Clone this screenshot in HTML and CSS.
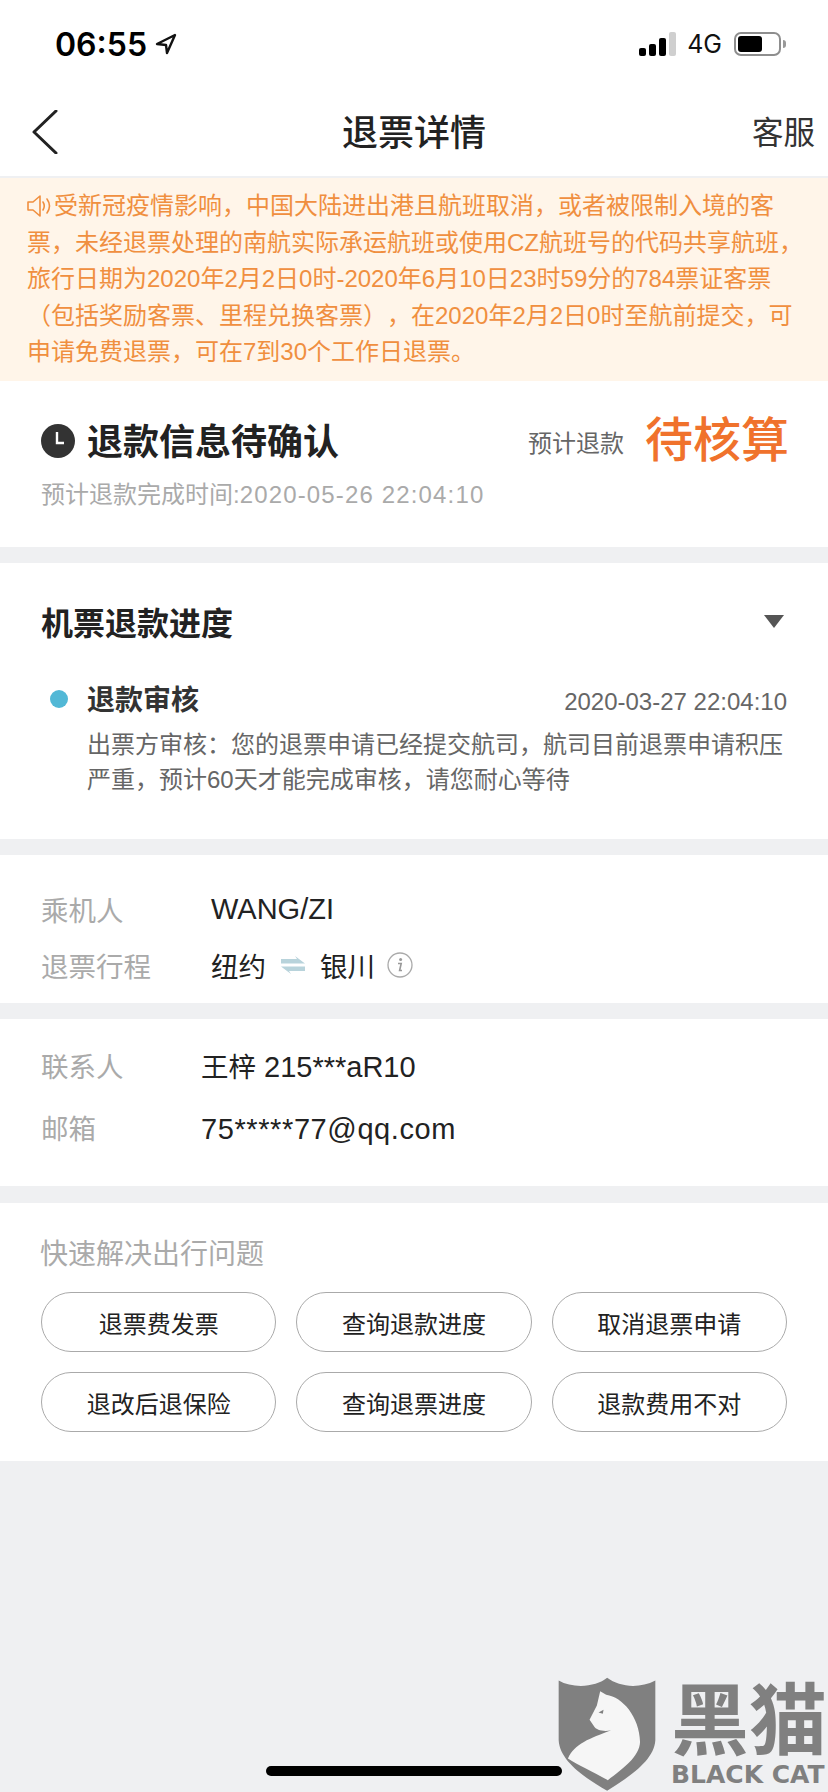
FILE: index.html
```html
<!DOCTYPE html>
<html lang="zh-CN">
<head>
<meta charset="utf-8">
<title>退票详情</title>
<link rel="stylesheet" href="styles.css">
</head>
<body>
<div class="page">
  <header class="status">
    <div class="status-left">
      <span class="time">06:55</span>
      <svg class="loc" viewBox="0 0 22 22"><path d="M20 2 L2 11 L11 12 L12 20 Z" fill="none" stroke="#111" stroke-width="2.4" stroke-linejoin="round"/></svg>
    </div>
    <div class="status-right">
      <div class="signal"><i class="b1"></i><i class="b2"></i><i class="b3"></i><i class="b4"></i></div>
      <span class="net">4G</span>
      <div class="battery"><div class="battery-fill"></div></div>
      <div class="battery-cap"></div>
    </div>
  </header>

  <nav class="nav">
    <svg class="back" viewBox="0 0 26 44"><path d="M24 1 L2 22 L24 43" fill="none" stroke="#222" stroke-width="3" stroke-linecap="round" stroke-linejoin="round"/></svg>
    <h1 class="nav-title">退票详情</h1>
    <span class="nav-action">客服</span>
  </nav>

  <section class="notice">
    <svg class="speaker" viewBox="0 0 26 24"><path d="M1 8 H6 L13 2 V22 L6 16 H1 Z" fill="none" stroke="#f08f3f" stroke-width="1.6" stroke-linejoin="round"/><path d="M16 8 Q18.5 12 16 16 M20 5 Q25 12 20 19" fill="none" stroke="#f08f3f" stroke-width="1.6" stroke-linecap="round"/></svg>受新冠疫情影响，中国大陆进出港且航班取消，或者被限制入境的客<br>票，未经退票处理的南航实际承运航班或使用CZ航班号的代码共享航班，<br>旅行日期为2020年2月2日0时-2020年6月10日23时59分的784票证客票<br>（包括奖励客票、里程兑换客票），在2020年2月2日0时至航前提交，可<br>申请免费退票，可在7到30个工作日退票。
  </section>

  <section class="card summary">
    <div class="summary-main">
      <div class="summary-title">
        <svg class="clock" viewBox="0 0 34 34"><circle cx="17" cy="17" r="17" fill="#333"/><path d="M16 8 V19 H23" fill="none" stroke="#fff" stroke-width="2.4"/></svg>
        <h2>退款信息待确认</h2>
      </div>
      <div class="summary-amount">
        <span class="amount-label">预计退款</span>
        <span class="amount-value">待核算</span>
      </div>
    </div>
    <p class="summary-sub">预计退款完成时间:<span class="sub-date">2020-05-26 22:04:10</span></p>
  </section>

  <section class="card progress">
    <div class="progress-head">
      <h2>机票退款进度</h2>
      <span class="caret"></span>
    </div>
    <div class="step">
      <span class="dot"></span>
      <div class="step-body">
        <div class="step-head">
          <h3>退款审核</h3>
          <span class="step-date">2020-03-27 22:04:10</span>
        </div>
        <p class="step-text">出票方审核：您的退票申请已经提交航司，航司目前退票申请积压严重，预计60天才能完成审核，请您耐心等待</p>
      </div>
    </div>
  </section>

  <section class="card passenger">
    <div class="row"><span class="label">乘机人</span><span class="value">WANG/ZI</span></div>
    <div class="row">
      <span class="label">退票行程</span>
      <span class="value route">
        <span>纽约</span>
        <svg class="swap" viewBox="0 0 24 18"><path d="M0 3 H16 L14 0 L24 7.5 H0 Z M24 10.5 V15 H8 L10 18 L0 10.5 Z" fill="#b8d3db"/></svg>
        <span>银川</span>
        <svg class="info" viewBox="0 0 26 26"><circle cx="13" cy="13" r="12" fill="none" stroke="#aaa" stroke-width="1.3"/><circle cx="13.6" cy="7.6" r="1.5" fill="#999"/><path d="M11 11.5 H14.2 L12.6 18.5 H15" fill="none" stroke="#999" stroke-width="1.6"/></svg>
      </span>
    </div>
  </section>

  <section class="card contact">
    <div class="row"><span class="label">联系人</span><span class="value"><span class="value-cjk">王梓</span> 215***aR10</span></div>
    <div class="row"><span class="label">邮箱</span><span class="value value-email">75*****77@qq.com</span></div>
  </section>

  <section class="card quick">
    <h2 class="quick-title">快速解决出行问题</h2>
    <div class="quick-grid">
      <button class="pill">退票费发票</button>
      <button class="pill">查询退款进度</button>
      <button class="pill">取消退票申请</button>
      <button class="pill">退改后退保险</button>
      <button class="pill">查询退票进度</button>
      <button class="pill">退款费用不对</button>
    </div>
  </section>

  <div class="home-bar"></div>

  <div class="watermark">
    <svg class="shield" viewBox="55 50 295 342">
      <path d="M57 60 C100 85 170 80 203 52 C240 80 300 85 348 60 L348 240 C345 300 270 350 203 392 C130 350 60 300 57 240 Z" fill="#808080"/>
      <path d="M182 92 L200 103 C250 110 300 170 302 245 C300 290 250 325 205 360 C160 335 115 315 85 295 C105 250 150 235 215 210 C190 215 170 208 165 200 L150 178 L172 135 Z" fill="#f6f6f6"/>
      <path d="M177 156 L192 148 L190 160 Z" fill="#808080"/>
    </svg>
    <div class="wm-text">
      <span class="wm-cn">黑猫</span>
      <span class="wm-en">BLACK CAT</span>
    </div>
  </div>
</div>
</body>
</html>
```

FILE: styles.css
```css
* { box-sizing: border-box; }
html, body { margin: 0; padding: 0; }
body {
  width: 828px;
  height: 1792px;
  overflow: hidden;
  background: #eff0f2;
  font-family: "Liberation Sans", "Noto Sans CJK SC", sans-serif;
  color: #222;
  text-spacing-trim: space-all;
}
h1, h2, h3, p { margin: 0; font-weight: 400; }

.page { position: relative; width: 828px; height: 1792px; }

/* status bar */
.status {
  height: 88px;
  padding: 0 42px 0 55px;
  background: #fff;
  display: flex;
  justify-content: space-between;
  align-items: center;
}
.status-left { display: flex; align-items: center; gap: 8px; }
.time { font-family: Inter, sans-serif; font-weight: 600; font-size: 32px; letter-spacing: 0; color: #000; }
.loc { width: 22px; height: 22px; }
.status-right { display: flex; align-items: center; }
.signal { display: flex; align-items: flex-end; gap: 3px; height: 24px; }
.signal i { display: block; width: 7px; background: #000; border-radius: 2px; }
.signal .b1 { height: 8px; }
.signal .b2 { height: 12px; }
.signal .b3 { height: 18px; }
.signal .b4 { height: 24px; background: #cfcfcf; }
.net { font-family: Inter, sans-serif; font-size: 25px; margin: 0 12px 0 11px; color: #111; }
.battery {
  width: 47px;
  height: 24px;
  border: 2px solid #8e8e8e;
  border-radius: 7px;
  padding: 2px;
}
.battery-fill { width: 24px; height: 100%; background: #000; border-radius: 3px; }
.battery-cap { width: 3px; height: 8px; background: #999; border-radius: 0 3px 3px 0; margin-left: 2px; }

/* nav */
.nav {
  position: relative;
  height: 90px;
  background: #fff;
  border-bottom: 2px solid #eff0f2;
  display: flex;
  align-items: center;
  justify-content: space-between;
  padding: 0 13px 4px 32px;
}
.back { width: 26px; height: 44px; margin-top: 4px; }
.nav-title {
  position: absolute;
  left: 0;
  right: 0;
  text-align: center;
  font-size: 36px;
  font-weight: 500;
  color: #222;
}
.nav-action { font-size: 31.5px; color: #333; }

/* notice */
.notice {
  height: 203px;
  padding: 10px 0 0 27px;
  background: #fff5e9;
  color: #f08f3f;
  font-size: 24px;
  line-height: 36.6px;
  white-space: nowrap;
}
.speaker { width: 26px; height: 24px; margin-right: 1px; vertical-align: -4px; }

/* cards */
.card { background: #fff; padding-left: 41px; padding-right: 41px; }

.summary { height: 166px; padding-top: 30px; margin-bottom: 16px; }
.summary-main { display: flex; justify-content: space-between; align-items: center; height: 60px; }
.summary-title { display: flex; align-items: center; gap: 12px; }
.clock { width: 34px; height: 34px; }
.summary-title h2 { font-size: 36px; font-weight: 700; color: #222; padding-bottom: 4px; }
.summary-amount { display: flex; align-items: center; gap: 21px; margin-right: -2px; }
.amount-label { font-size: 24px; color: #666; }
.amount-value { font-size: 48px; font-weight: 500; color: #f0722c; line-height: 60px; }
.summary-sub { margin-top: 6px; font-size: 24px; line-height: 36px; color: #aaa; }
.sub-date { letter-spacing: 1.15px; }

.progress { height: 276px; padding-top: 34px; margin-bottom: 16px; }
.progress-head { display: flex; justify-content: space-between; align-items: center; height: 48px; }
.progress-head h2 { font-size: 32px; font-weight: 700; color: #222; }
.caret {
  width: 0;
  height: 0;
  border-left: 10px solid transparent;
  border-right: 10px solid transparent;
  border-top: 13px solid #555;
  margin-right: 3px;
}
.step { display: flex; margin-top: 28px; }
.dot { flex: none; width: 18px; height: 18px; margin: 17px 19px 0 9px; border-radius: 50%; background: #52b8d6; }
.step-body { flex: 1; }
.step-head { display: flex; justify-content: space-between; align-items: center; height: 50px; }
.step-head h3 { font-size: 28px; font-weight: 700; color: #333; }
.step-date { font-size: 24px; color: #666; padding-top: 8px; }
.step-text { margin-top: 4px; font-size: 24px; line-height: 35px; color: #666; }

.passenger { height: 148px; padding-top: 26px; margin-bottom: 16px; }
.passenger .row { height: 56px; }
.passenger .label { width: 170px; }
.contact { height: 167px; padding-top: 15px; margin-bottom: 17px; }
.contact .row { height: 62px; }
.contact .label { width: 160px; }
.row { display: flex; align-items: center; font-size: 27.5px; }
.label { flex: none; color: #aaa; }
.value { color: #222; font-size: 29px; }
.value-cjk { font-size: 27.5px; }
.value-email { letter-spacing: 0.6px; padding-top: 4px; }
.route { display: flex; align-items: center; font-size: 27.5px; }
.swap { width: 24px; height: 18px; margin: 0 15px; }
.info { width: 26px; height: 26px; margin-left: 12px; }

.quick { height: 258px; padding-top: 32px; }
.quick-title { font-size: 28px; line-height: 40px; color: #aaa; margin-left: -1px; }
.quick-grid { display: grid; grid-template-columns: repeat(3, 1fr); gap: 20px; margin-top: 17px; }
.pill {
  height: 60px;
  padding: 0;
  border: 1px solid #aaa;
  border-radius: 30px;
  background: #fff;
  font: inherit;
  font-size: 24px;
  color: #222;
}

/* overlays */
.home-bar {
  position: absolute;
  left: 266px;
  top: 1766px;
  width: 296px;
  height: 10px;
  border-radius: 5px;
  background: #000;
}
.watermark {
  position: absolute;
  left: 558px;
  top: 1677px;
  display: flex;
  gap: 15px;
}
.shield { width: 98px; height: 114px; }
.wm-text { display: flex; flex-direction: column; width: 155px; margin-top: 4px; color: #808080; font-weight: 700; }
.wm-cn { font-size: 78px; line-height: 82px; letter-spacing: 0; white-space: nowrap; }
.wm-en { font-family: "DejaVu Sans", sans-serif; font-size: 25px; line-height: 24px; white-space: nowrap; }
```
